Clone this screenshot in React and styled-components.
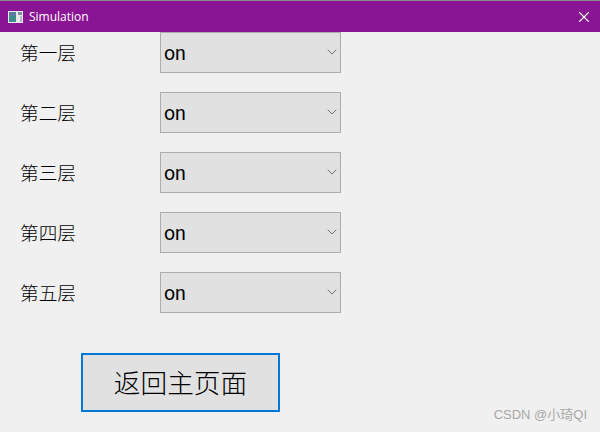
import React from 'react';
import styled, { createGlobalStyle } from 'styled-components';
import { X, ChevronDown } from 'lucide-react';

const GlobalStyle = createGlobalStyle`
  html, body {
    margin: 0;
    padding: 0;
    background: #f0f0f0;
  }
`;

const Window = styled.div`
  position: relative;
  width: 600px;
  height: 432px;
  overflow: hidden;
  background: #f0f0f0;
  border-top: 1px solid #8a8a8a;
  box-sizing: border-box;
  font-family: 'Liberation Sans', 'Noto Sans CJK SC', sans-serif;
`;

const TitleBar = styled.div`
  height: 31px;
  display: flex;
  align-items: center;
  padding: 0 8px;
  background: #8a1594;
  color: #fff;
  font-family: 'Open Sans', 'Liberation Sans', sans-serif;
  font-size: 12px;
`;

const TitleText = styled.span`
  margin-left: 6px;
  flex: 1;
`;

const CloseButton = styled.button`
  display: flex;
  padding: 0;
  margin-right: -1px;
  border: 0;
  background: none;
  color: #fff;
`;

const Form = styled.div`
  display: flex;
  flex-direction: column;
  gap: 19px;
  padding-left: 20px;
`;

const Row = styled.div`
  display: grid;
  grid-template-columns: 140px 181px;
  align-items: center;
`;

const Label = styled.label`
  margin-top: -2px;
  font-family: 'Noto Sans CJK SC', sans-serif;
  font-size: 18.67px;
  font-weight: 300;
  color: #000;
`;

const Combo = styled.div`
  height: 41px;
  box-sizing: border-box;
  display: flex;
  align-items: center;
  justify-content: space-between;
  padding: 2px 3px 0;
  background: #e1e1e1;
  border: 1px solid #adadad;
  color: #000;
  font-family: 'Roboto', sans-serif;
  font-size: 19.5px;
`;

const Arrow = styled(ChevronDown)`
  color: #555;
  margin-top: -3px;
  margin-right: -3px;
`;

const BackButton = styled.button`
  display: block;
  width: 199px;
  height: 59px;
  margin: 40px 0 0 81px;
  padding: 0 0 2px;
  background: #e1e1e1;
  border: 2px solid #0078d7;
  color: #000;
  font-family: 'Noto Sans CJK SC', sans-serif;
  font-size: 26.67px;
  font-weight: 300;
`;

const Watermark = styled.span`
  position: absolute;
  right: 13px;
  bottom: 9px;
  color: #a8a8a8;
  font-size: 13px;
`;

const AppIcon = () => (
  <svg width="15" height="12" viewBox="0 0 15 12">
    <rect width="15" height="12" fill="#e8e8ee" />
    <rect x="1" y="1" width="7" height="10" fill="#3f8a8a" />
    <rect x="1" y="1" width="7" height="4" fill="#5b7f9e" />
    <rect x="10" y="1" width="4" height="3" fill="#7f8fa0" />
    <rect x="12" y="5" width="2" height="6" fill="#b4bcc4" />
  </svg>
);

const floors = ['第一层', '第二层', '第三层', '第四层', '第五层'];

const App = () => (
  <Window>
    <GlobalStyle />
    <TitleBar>
      <AppIcon />
      <TitleText>Simulation</TitleText>
      <CloseButton>
        <X size={18} strokeWidth={1.5} />
      </CloseButton>
    </TitleBar>
    <Form>
      {floors.map((floor) => (
        <Row key={floor}>
          <Label>{floor}</Label>
          <Combo>
            on
            <Arrow size={16} strokeWidth={1.2} />
          </Combo>
        </Row>
      ))}
    </Form>
    <BackButton>返回主页面</BackButton>
    <Watermark>CSDN @小琦QI</Watermark>
  </Window>
);

export default App;
